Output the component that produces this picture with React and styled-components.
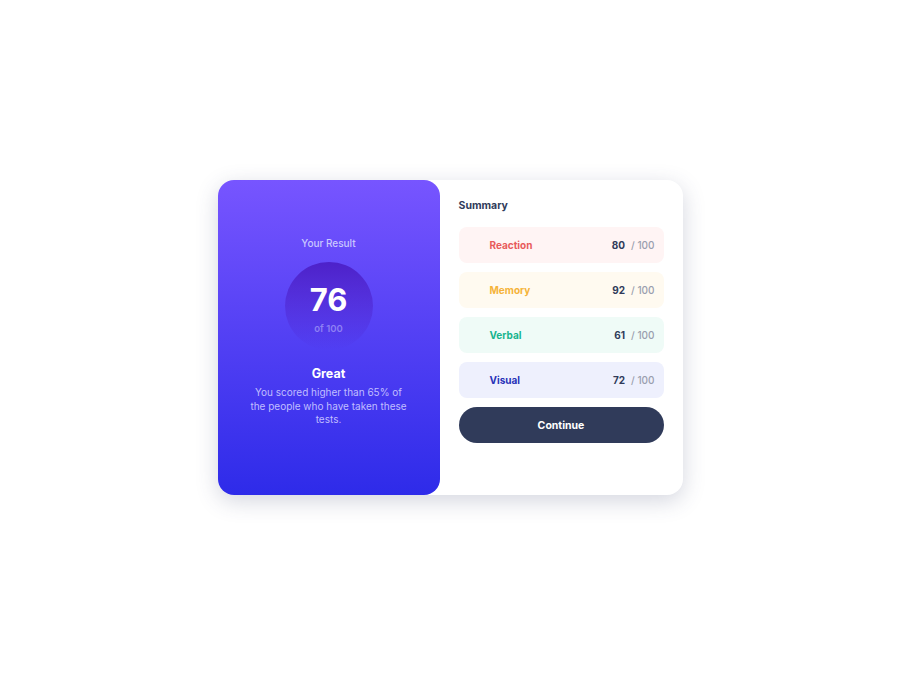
import React from "react";
import styled, { createGlobalStyle } from "styled-components";

const GlobalStyle = createGlobalStyle`
  html, body, #root {
    margin: 0;
    height: 100%;
  }
  body {
    font-family: "Inter", "Noto Sans", sans-serif;
    background: #ffffff;
  }
`;

const scores = [
  { label: "Reaction", score: 80, color: "#e85b5b", bg: "#fff4f4" },
  { label: "Memory", score: 92, color: "#f5b33a", bg: "#fffaf0" },
  { label: "Verbal", score: 61, color: "#17b48e", bg: "#effbf7" },
  { label: "Visual", score: 72, color: "#2732b8", bg: "#eef0fd" },
];

const App = () => {
  return (
    <>
      <GlobalStyle />
      <Page>
        <Card>
          <ResultPanel>
            <ResultTitle>Your Result</ResultTitle>
            <Circle>
              <BigScore>76</BigScore>
              <OutOf>of 100</OutOf>
            </Circle>
            <Verdict>Great</Verdict>
            <Description>
              You scored higher than 65% of the people who have taken these
              tests.
            </Description>
          </ResultPanel>
          <SummaryPanel>
            <SummaryTitle>Summary</SummaryTitle>
            <List>
              {scores.map((item) => (
                <Row key={item.label} $bg={item.bg}>
                  <Label $color={item.color}>{item.label}</Label>
                  <Value>
                    <strong>{item.score}</strong>
                    <span>/ 100</span>
                  </Value>
                </Row>
              ))}
            </List>
            <Button>Continue</Button>
          </SummaryPanel>
        </Card>
      </Page>
    </>
  );
};

export default App;

const Page = styled.div`
  height: 100%;
  display: flex;
  align-items: center;
  justify-content: center;
`;

const Card = styled.div`
  width: 465px;
  height: 315px;
  display: flex;
  background: #fff;
  border-radius: 16px;
  box-shadow: 0 6px 22px rgba(60, 70, 110, 0.22);
`;

const ResultPanel = styled.div`
  width: 222px;
  flex-shrink: 0;
  border-radius: 16px;
  background: linear-gradient(180deg, #7755ff 0%, #2e2be9 100%);
  display: flex;
  flex-direction: column;
  align-items: center;
  padding-top: 57px;
  box-sizing: border-box;
`;

const ResultTitle = styled.div`
  color: #cac8ff;
  font-size: 10px;
  font-weight: 500;
`;

const Circle = styled.div`
  margin-top: 13px;
  width: 88px;
  height: 88px;
  border-radius: 50%;
  background: linear-gradient(180deg, #4d21c9 0%, rgba(37, 33, 201, 0) 100%);
  display: flex;
  flex-direction: column;
  align-items: center;
  justify-content: center;
`;

const BigScore = styled.div`
  color: #fff;
  font-size: 31px;
  font-weight: 700;
  line-height: 1;
  margin-top: 6px;
`;

const OutOf = styled.div`
  color: rgba(202, 200, 255, 0.5);
  font-size: 9.5px;
  font-weight: 600;
  margin-top: 8px;
`;

const Verdict = styled.div`
  margin-top: 16px;
  color: #fff;
  font-size: 12.5px;
  font-weight: 700;
`;

const Description = styled.p`
  margin: 5px 0 0;
  width: 160px;
  text-align: center;
  color: #c0beff;
  font-size: 10px;
  line-height: 13.5px;
`;

const SummaryPanel = styled.div`
  flex: 1;
  padding: 19px 19px 0;
  display: flex;
  flex-direction: column;
`;

const SummaryTitle = styled.div`
  color: #303b5a;
  font-size: 10.5px;
  font-weight: 700;
  line-height: 14px;
`;

const List = styled.div`
  margin-top: 14px;
  display: flex;
  flex-direction: column;
  gap: 9px;
`;

const Row = styled.div`
  height: 36px;
  border-radius: 8px;
  background: ${(p) => p.$bg};
  display: flex;
  align-items: center;
  justify-content: space-between;
  padding: 0 9px 0 31px;
`;

const Label = styled.span`
  color: ${(p) => p.$color};
  font-size: 10px;
  font-weight: 700;
`;

const Value = styled.span`
  font-size: 10px;
  display: flex;
  gap: 6px;
  strong {
    color: #303b5a;
    font-weight: 700;
  }
  span {
    color: #9a9eae;
    font-weight: 500;
  }
`;

const Button = styled.button`
  margin-top: 9px;
  height: 36px;
  border: none;
  border-radius: 18px;
  background: #303b5a;
  color: #fff;
  font-family: inherit;
  font-size: 10.5px;
  font-weight: 700;
`;
